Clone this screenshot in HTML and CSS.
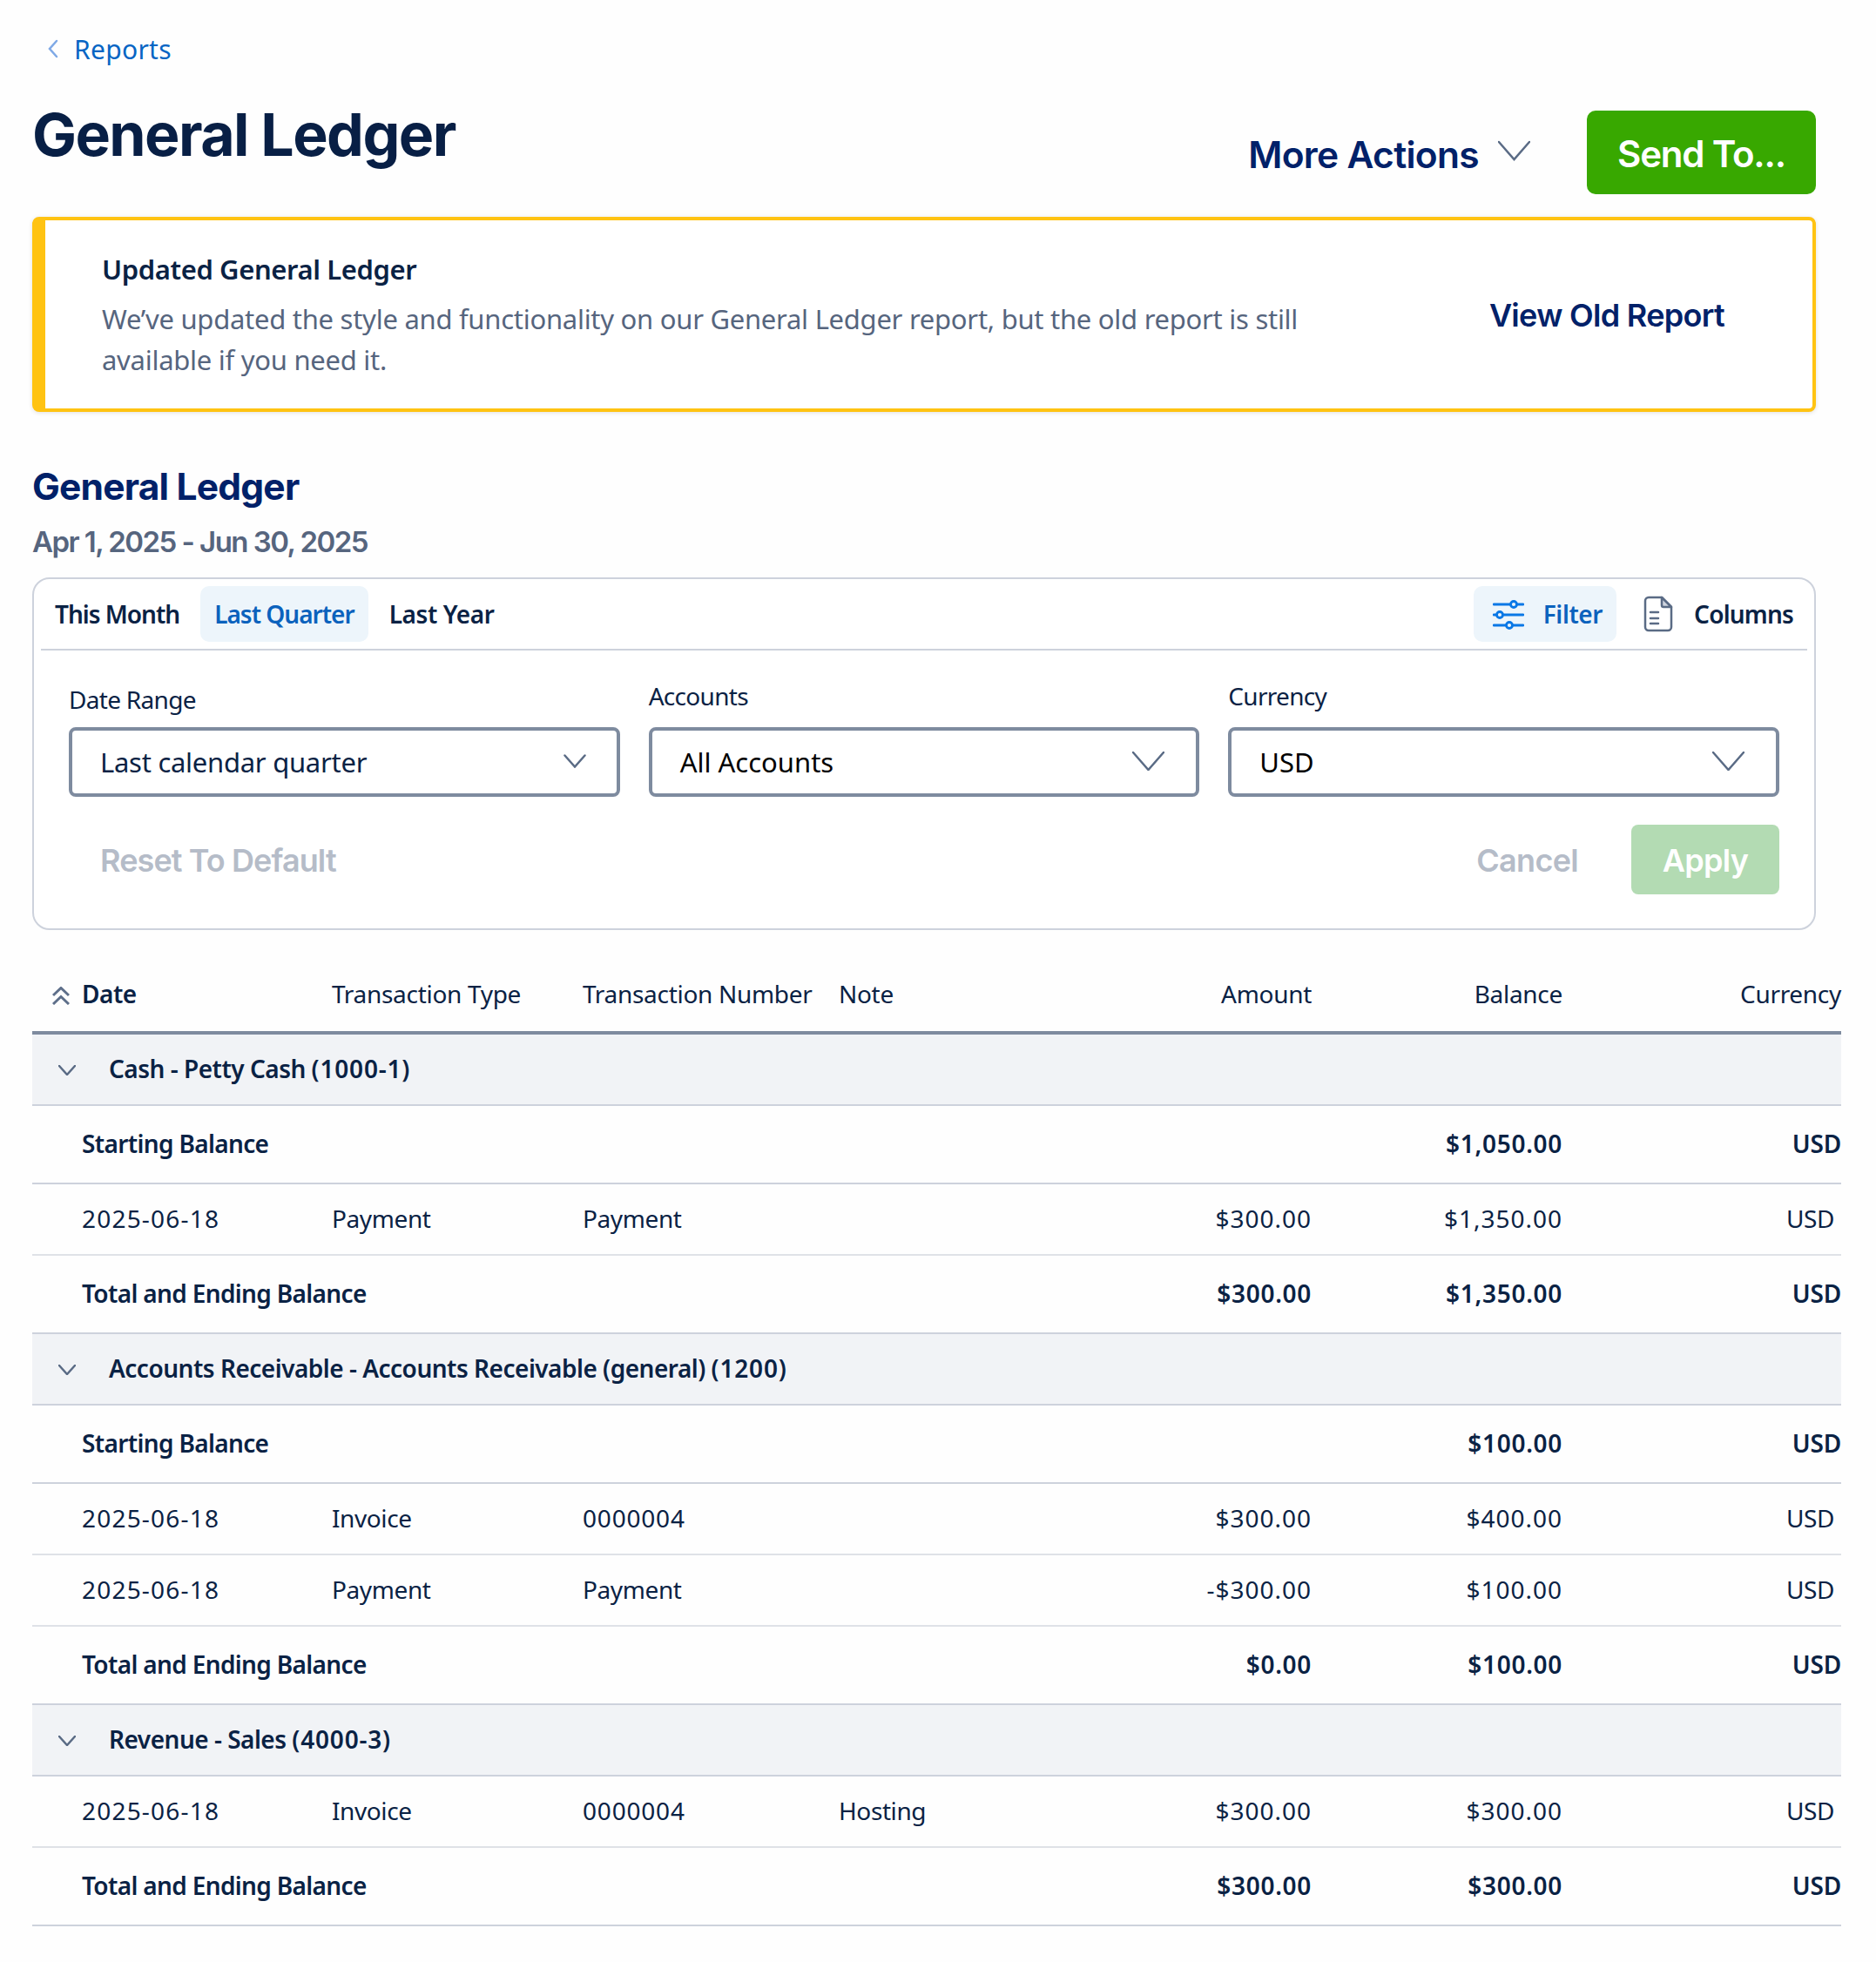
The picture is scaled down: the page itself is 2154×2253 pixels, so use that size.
FILE: index.html
```html
<!DOCTYPE html>
<html lang="en">
<head>
<meta charset="utf-8">
<title>General Ledger</title>
<link rel="stylesheet" href="styles.css">
</head>
<body>
<main class="page">
  <div class="top">
    <a class="back"><svg class="back-icon" width="14" height="22" viewBox="0 0 14 22"><path d="M11 2 3 11l8 9"/></svg>Reports</a>
    <header class="header">
      <h1 class="title">General Ledger</h1>
      <div class="header-actions">
        <button class="more"><span class="more-label">More Actions</span><svg class="chev" width="37" height="24" viewBox="0 0 37 24"><path d="M1 2l17.500 20L36 2"/></svg></button>
        <button class="send">Send To...</button>
      </div>
    </header>
    <section class="banner">
      <div class="banner-text">
        <h2 class="banner-title">Updated General Ledger</h2>
        <p class="banner-body">We’ve updated the style and functionality on our General Ledger report, but the old report is still available if you need it.</p>
      </div>
      <button class="banner-link">View Old Report</button>
    </section>
    <h2 class="report-title">General Ledger</h2>
    <p class="report-dates">Apr 1, 2025 - Jun 30, 2025</p>
    <section class="card">
      <div class="tabs">
        <button class="tab">This Month</button>
        <button class="tab tab-active">Last Quarter</button>
        <button class="tab tab-year">Last Year</button>
        <div class="tools">
          <button class="tool tool-active">
            <svg class="tool-icon" width="36" height="36" viewBox="0 0 36 36" fill="none" stroke="#0a78e6" stroke-width="2.800" stroke-linecap="round">
              <path d="M1 7h19M28 7h7M1 19h3M12 19h23M1 31h14M23 31h12"/>
              <circle cx="24" cy="7" r="3.500"/><circle cx="8" cy="19" r="3.500"/><circle cx="19" cy="31" r="3.500"/>
            </svg>Filter</button>
          <button class="tool">
            <svg class="file-icon" width="34" height="42" viewBox="0 0 34 42" fill="none" stroke="#5a6b85" stroke-width="2.500" stroke-linejoin="round">
              <path d="M21 2H6a4 4 0 0 0-4 4v30a4 4 0 0 0 4 4h22a4 4 0 0 0 4-4V13z"/>
              <path d="M21 2l11 11H23a2 2 0 0 1-2-2z" fill="#cfd5df"/>
              <path d="M8 19h9M8 26h9M8 32h9" stroke-width="2.500"/>
            </svg>Columns</button>
        </div>
      </div>
      <div class="fields">
        <div class="field field-low">
          <label class="label">Date Range</label>
          <div class="select select-navy">Last calendar quarter<svg class="chev-sm" width="26" height="16" viewBox="0 0 26 16"><path d="M1.500 1.500 13 14.500 24.500 1.500"/></svg></div>
        </div>
        <div class="field">
          <label class="label">Accounts</label>
          <div class="select">All Accounts<svg class="chev-md" width="37" height="22" viewBox="0 0 37 22"><path d="M1 1l17.500 20L36 1"/></svg></div>
        </div>
        <div class="field">
          <label class="label">Currency</label>
          <div class="select">USD<svg class="chev-md" width="37" height="22" viewBox="0 0 37 22"><path d="M1 1l17.500 20L36 1"/></svg></div>
        </div>
      </div>
      <div class="form-actions">
        <button class="ghost ghost-reset">Reset To Default</button>
        <button class="ghost">Cancel</button>
        <button class="apply">Apply</button>
      </div>
    </section>
  </div>

  <table class="ledger">
    <colgroup><col class="c-date"><col class="c-type"><col class="c-num"><col class="c-note"><col class="c-amt"><col class="c-bal"><col class="c-cur"></colgroup>
    <thead>
      <tr>
        <th class="sort"><svg class="sort-icon" width="20" height="21" viewBox="0 0 20 21"><path d="M1 10 10 1.500 19 10M1 20 10 11.500 19 20"/></svg>Date</th>
        <th>Transaction Type</th>
        <th>Transaction Number</th>
        <th>Note</th>
        <th class="num">Amount</th>
        <th class="num">Balance</th>
        <th class="num">Currency</th>
      </tr>
    </thead>
    <tbody>
      <tr class="group"><td colspan="7"><svg class="group-icon" width="20" height="12" viewBox="0 0 20 12"><path d="M1 1l9 10 9-10"/></svg>Cash - Petty Cash <span class="digits">(1000-1)</span></td></tr>
      <tr class="sum"><td colspan="5">Starting Balance</td><td class="num">$1,050.00</td><td class="num code">USD</td></tr>
      <tr class="row"><td class="date">2025-06-18</td><td>Payment</td><td>Payment</td><td></td><td class="num">$300.00</td><td class="num">$1,350.00</td><td class="num cur">USD</td></tr>
      <tr class="sum"><td colspan="4">Total and Ending Balance</td><td class="num">$300.00</td><td class="num">$1,350.00</td><td class="num code">USD</td></tr>

      <tr class="group"><td colspan="7"><svg class="group-icon" width="20" height="12" viewBox="0 0 20 12"><path d="M1 1l9 10 9-10"/></svg>Accounts Receivable - Accounts Receivable (general) <span class="digits">(1200)</span></td></tr>
      <tr class="sum"><td colspan="5">Starting Balance</td><td class="num">$100.00</td><td class="num code">USD</td></tr>
      <tr class="row"><td class="date">2025-06-18</td><td>Invoice</td><td class="ref">0000004</td><td></td><td class="num">$300.00</td><td class="num">$400.00</td><td class="num cur">USD</td></tr>
      <tr class="row"><td class="date">2025-06-18</td><td>Payment</td><td>Payment</td><td></td><td class="num">-$300.00</td><td class="num">$100.00</td><td class="num cur">USD</td></tr>
      <tr class="sum"><td colspan="4">Total and Ending Balance</td><td class="num">$0.00</td><td class="num">$100.00</td><td class="num code">USD</td></tr>

      <tr class="group"><td colspan="7"><svg class="group-icon" width="20" height="12" viewBox="0 0 20 12"><path d="M1 1l9 10 9-10"/></svg>Revenue - Sales <span class="digits">(4000-3)</span></td></tr>
      <tr class="row"><td class="date">2025-06-18</td><td>Invoice</td><td class="ref">0000004</td><td>Hosting</td><td class="num">$300.00</td><td class="num">$300.00</td><td class="num cur">USD</td></tr>
      <tr class="sum"><td colspan="4">Total and Ending Balance</td><td class="num">$300.00</td><td class="num">$300.00</td><td class="num code">USD</td></tr>
    </tbody>
  </table>
</main>
</body>
</html>
```
FILE: styles.css
```css
* { box-sizing: border-box; }
html, body { margin: 0; padding: 0; }
body {
  background: #fefefe;
  color: #0a2244;
  font-family: "Noto Sans", "Liberation Sans", sans-serif;
  font-size: 28px;
}
button { font: inherit; border: 0; background: none; padding: 0; color: inherit; }
svg { display: block; flex: none; fill: none; }
svg path { stroke-linecap: round; }

.page { padding: 35px 40px 41px 37px; }
.top { width: 2048px; }

.back {
  display: flex; align-items: center; gap: 17px;
  height: 42px; padding-left: 17px;
  color: #0765c4; font-size: 30px; letter-spacing: 0.3px;
}
.back-icon path { stroke: #7fa9e6; stroke-width: 2.500; }

.header { display: flex; justify-content: space-between; align-items: flex-start; margin-top: 50px; height: 96px; }
.title {
  margin: -15px 0 0; font-family: Inter, sans-serif; font-size: 68px; font-weight: 700;
  line-height: 84px; color: #081f45; letter-spacing: -1.6px;
}
.header-actions { display: flex; align-items: center; height: 96px; }
.more {
  display: flex; align-items: center; gap: 22px;
  margin-right: 65px; height: 96px;
  font-family: Inter, sans-serif; font-size: 42.500px; font-weight: 600; color: #012169; letter-spacing: -0.7px;
}
.more-label { position: relative; top: 2px; }
.chev path { stroke: #5a6b85; stroke-width: 2.500; }
.chev { margin-top: -4px; }
.send {
  width: 263px; height: 96px; padding-top: 3px; border-radius: 10px; background: #38a800; color: #fff;
  font-family: Inter, sans-serif; font-size: 42px; font-weight: 600; letter-spacing: -1.2px;
}

.banner {
  display: flex; align-items: center; justify-content: space-between;
  height: 224px; margin-top: 26px; padding: 0 101px 0 65px;
  border: 4px solid #ffc312; border-left-width: 15px; border-radius: 8px;
  background: #fff; box-shadow: 0 1px 5px rgba(0, 0, 0, .12);
}
.banner-text { width: 1400px; padding-top: 3px; }
.banner-title { margin: 0; font-size: 31px; font-weight: 600; line-height: 42px; color: #0a2244; letter-spacing: -0.4px; }
.banner-body { margin: 13px 0 0; font-size: 31px; line-height: 47px; color: #56657e; letter-spacing: -0.27px; }
.banner-link {
  padding-top: 2px;
  font-family: Inter, sans-serif; font-size: 36px; font-weight: 600; color: #012169;
  letter-spacing: -0.7px; white-space: nowrap;
}

.report-title {
  margin: 59px 0 0; font-family: Inter, sans-serif; font-size: 42.500px; line-height: 54px;
  font-weight: 700; color: #012169; letter-spacing: -0.8px;
}
.report-dates {
  margin: 14px 0 0; font-family: Inter, sans-serif; font-size: 33px; line-height: 44px;
  font-weight: 600; color: #56657e; letter-spacing: -1.55px;
}

.card { margin-top: 19px; height: 405px; border: 2px solid #cdd2dc; border-radius: 20px; background: #fff; }
.tabs {
  display: flex; align-items: center; margin: 8px 8px 0; height: 74px; padding-bottom: 8px;
  border-bottom: 2px solid #cdd2dc;
}
.tab, .tool {
  display: flex; align-items: center; height: 64px; padding: 0 16px; border-radius: 10px;
  font-size: 28px; font-weight: 600; color: #0a2244; letter-spacing: -1px;
}
.tab-active, .tool-active { background: #edf5fb; color: #0b62bd; }
.tab:first-child { margin-right: 8px; }
.tab-active { margin-right: 8px; }
.tab-year { letter-spacing: -0.4px; }
.tools { display: flex; align-items: center; margin-left: auto; }
.tool { padding: 0 16px 0 22px; gap: 22px; letter-spacing: -0.8px; }
.tool-active { margin-right: 10px; letter-spacing: -0.4px; }
.tool:last-child { padding: 0 16px 0 21px; gap: 24px; }

.fields { display: grid; grid-template-columns: repeat(3, 1fr); gap: 33px; padding: 32px 40px 0; }
.field { display: flex; flex-direction: column; }
.label { height: 40px; line-height: 40px; margin-bottom: 16px; font-size: 28px; color: #0a2244; letter-spacing: -0.7px; }
.field-low .label { margin-top: 4px; margin-bottom: 12px; }
.select {
  display: flex; align-items: center; justify-content: space-between;
  height: 80px; padding: 0 36px 0 32px;
  border: 4px solid #7e8b9f; border-radius: 8px; background: #fff;
  font-size: 31px; color: #000;
}
.select-navy { color: #0a2244; padding-right: 35px; letter-spacing: -0.27px; }
.chev-sm path, .chev-md path { stroke: #5a6b85; stroke-width: 2.500; }
.chev-md { margin-top: -3px; }
.chev-sm { margin-top: -3px; }

.form-actions { display: flex; align-items: center; margin: 32px 40px 0; }
.ghost {
  padding-top: 2px;
  font-family: Inter, sans-serif; font-size: 36px; font-weight: 600; color: #b5bcc8; letter-spacing: -0.7px;
}
.ghost-reset { margin: 0 auto 0 36px; letter-spacing: -0.9px; }
.apply {
  width: 170px; height: 80px; margin-left: 61px; padding-top: 2px; border-radius: 8px; background: #b3dbb3; color: #fff;
  font-family: Inter, sans-serif; font-size: 36px; font-weight: 600; letter-spacing: -0.7px;
}

.ledger { width: 2077px; margin-top: 29px; border-collapse: separate; border-spacing: 0; table-layout: fixed; }
.c-date { width: 344px; }
.c-type { width: 288px; }
.c-num { width: 294px; }
.c-note { width: 243px; }
.c-amt { width: 300px; }
.c-bal { width: 288px; }
.c-cur { width: 320px; }
.ledger th, .ledger td { padding: 0; text-align: left; white-space: nowrap; }
.ledger td { padding-bottom: 2px; }
.ledger th:first-child, .ledger td:first-child { padding-left: 57px; }
.ledger .num { text-align: right; }
.ledger th {
  height: 91px; border-bottom: 4px solid #7e8b9f; font-size: 28px; font-weight: 400; color: #0a2244;
  letter-spacing: -0.3px; vertical-align: middle;
}
.ledger th.sort { font-weight: 600; position: relative; letter-spacing: -0.5px; }
.sort-icon { position: absolute; left: 23px; top: 36px; }
.sort-icon path { stroke: #5e6f8a; stroke-width: 3; stroke-linecap: butt; }

.group td {
  position: relative; height: 82px; padding-left: 88px !important; background: #f1f3f6;
  border-bottom: 2px solid #cdd2dc; font-weight: 600; letter-spacing: -0.5px;
}
.group-icon { position: absolute; left: 30px; top: 35px; }
.group-icon path { stroke: #5a6b85; stroke-width: 2.500; }
.digits { letter-spacing: 0.8px; }
.sum td { height: 90px; border-bottom: 2px solid #cdd2dc; font-weight: 600; letter-spacing: -0.65px; }
.sum td.num { letter-spacing: 0.7px; }
.sum td.code { letter-spacing: -0.2px; }
.row td { height: 82px; border-bottom: 2px solid #dfe2e7; letter-spacing: -0.4px; }
.row td.date { letter-spacing: 1.2px; }
.row td.ref { letter-spacing: 0.8px; }
.row td.num { letter-spacing: 1px; }
.row td.cur { padding-right: 8px; letter-spacing: -0.4px; }
```
